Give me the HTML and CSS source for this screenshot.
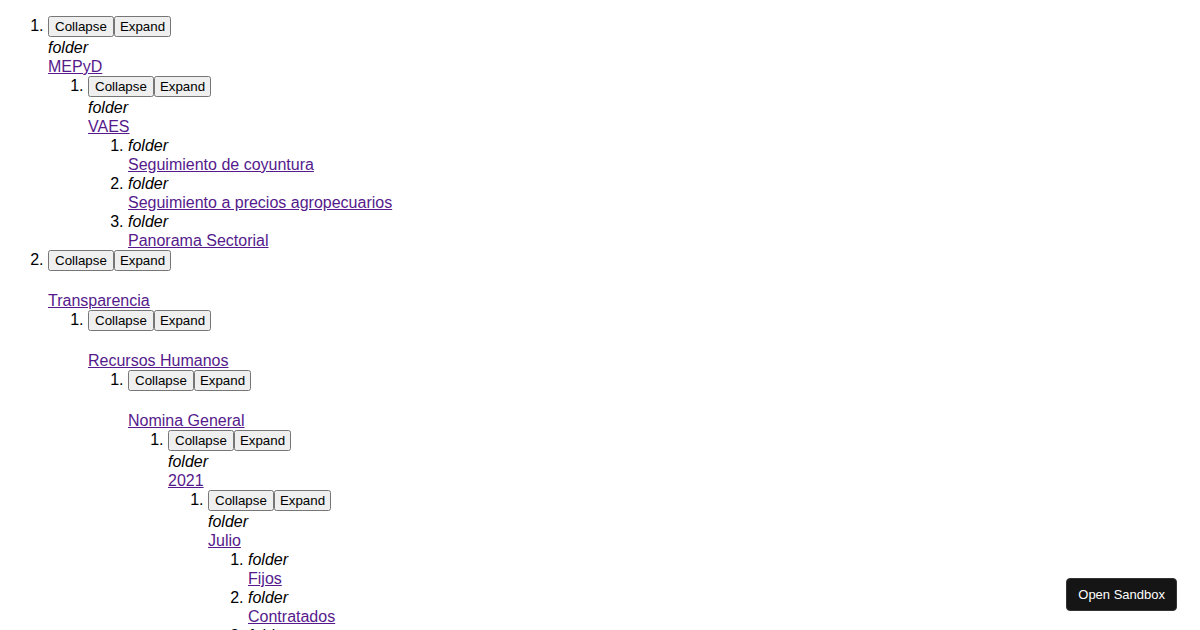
FILE: index.html
```html
<!DOCTYPE html>
<html>
<head>
<meta charset="utf-8">
<link rel="stylesheet" href="styles.css">
</head>
<body>
<ol class="tree">
  <li>
    <button>Collapse</button><button>Expand</button>
    <div class="icon">folder</div>
    <a href="#">MEPyD</a>
    <ol>
      <li>
        <button>Collapse</button><button>Expand</button>
        <div class="icon">folder</div>
        <a href="#">VAES</a>
        <ol>
          <li><div class="icon">folder</div><a href="#">Seguimiento de coyuntura</a></li>
          <li><div class="icon">folder</div><a href="#">Seguimiento a precios agropecuarios</a></li>
          <li><div class="icon">folder</div><a href="#">Panorama Sectorial</a></li>
        </ol>
      </li>
    </ol>
  </li>
  <li>
    <button>Collapse</button><button>Expand</button>
    <div class="icon">&nbsp;</div>
    <a href="#">Transparencia</a>
    <ol>
      <li>
        <button>Collapse</button><button>Expand</button>
        <div class="icon">&nbsp;</div>
        <a href="#">Recursos Humanos</a>
        <ol>
          <li>
            <button>Collapse</button><button>Expand</button>
            <div class="icon">&nbsp;</div>
            <a href="#">Nomina General</a>
            <ol>
              <li>
                <button>Collapse</button><button>Expand</button>
                <div class="icon">folder</div>
                <a href="#">2021</a>
                <ol>
                  <li>
                    <button>Collapse</button><button>Expand</button>
                    <div class="icon">folder</div>
                    <a href="#">Julio</a>
                    <ol>
                      <li><div class="icon">folder</div><a href="#">Fijos</a></li>
                      <li><div class="icon">folder</div><a href="#">Contratados</a></li>
                      <li><div class="icon">folder</div><a href="#">Eventuales</a></li>
                    </ol>
                  </li>
                </ol>
              </li>
            </ol>
          </li>
        </ol>
      </li>
    </ol>
  </li>
</ol>
<a class="sandbox" href="#">Open Sandbox</a>
</body>
</html>
```

FILE: styles.css
```css
body {
  margin: 0 8px;
  font-family: "Liberation Sans", Arial, sans-serif;
  font-size: 16px;
  line-height: 19px;
}
.tree {
  margin: 16px 0;
}
.tree a {
  color: #551a8b;
}
.icon {
  font-style: italic;
}
button {
  font-family: "Liberation Sans", Arial, sans-serif;
  font-size: 13.333px;
  line-height: 15px;
  padding: 1px 5px;
  margin: 0 0 1px;
  vertical-align: baseline;
}
button + button {
  padding: 1px 4px;
}
.sandbox {
  position: fixed;
  right: 23px;
  bottom: 19px;
  background: #151515;
  color: #fff;
  text-decoration: none;
  font-size: 13px;
  line-height: 15px;
  padding: 8px 11px;
  border-radius: 4px;
  border: 1px solid #333;
}
```
